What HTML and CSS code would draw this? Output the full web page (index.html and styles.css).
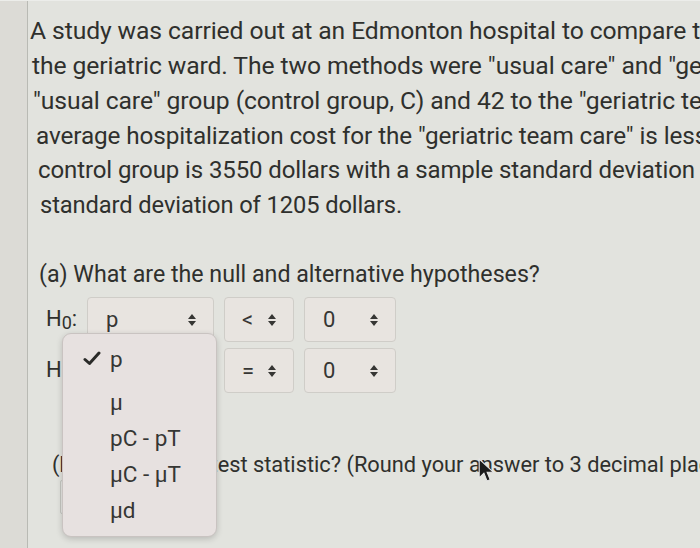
FILE: index.html
```html
<!DOCTYPE html>
<html>
<head>
<meta charset="utf-8">
<link rel="stylesheet" href="styles.css">
</head>
<body>
<div class="page">
  <div class="gutter"></div>
  <div class="main">
    <div class="prompt">
      <p class="line l1">A study was carried out at an Edmonton hospital to compare the two methods of care in</p>
      <p class="line l2">the geriatric ward. The two methods were "usual care" and "geriatric team care". 43 were assigned to the</p>
      <p class="line l3">"usual care" group (control group, C) and 42 to the "geriatric team care" group (treatment group, T).</p>
      <p class="line l4">average hospitalization cost for the "geriatric team care" is less than that for usual care.</p>
      <p class="line l5">control group is 3550 dollars with a sample standard deviation of 1150 dollars,</p>
      <p class="line l6">standard deviation of 1205 dollars.</p>
    </div>

    <div class="part-a">
      <p class="question">(a) What are the null and alternative hypotheses?</p>
      <div class="hyp-row">
        <span class="hyp-label">H<sub>0</sub>:</span>
        <div class="sel sel-param"><span>p</span><svg class="arrows" viewBox="0 0 8 12"><path d="M4 0L8 5H0Z M0 7H8L4 12Z"/></svg></div>
        <div class="sel sel-op"><span>&lt;</span><svg class="arrows" viewBox="0 0 8 12"><path d="M4 0L8 5H0Z M0 7H8L4 12Z"/></svg></div>
        <div class="sel sel-val"><span>0</span><svg class="arrows" viewBox="0 0 8 12"><path d="M4 0L8 5H0Z M0 7H8L4 12Z"/></svg></div>
      </div>
      <div class="hyp-row row2">
        <span class="hyp-label">H<sub>1</sub>:</span>
        <div class="sel sel-param"><span>p</span><svg class="arrows" viewBox="0 0 8 12"><path d="M4 0L8 5H0Z M0 7H8L4 12Z"/></svg></div>
        <div class="sel sel-op"><span>=</span><svg class="arrows" viewBox="0 0 8 12"><path d="M4 0L8 5H0Z M0 7H8L4 12Z"/></svg></div>
        <div class="sel sel-val"><span>0</span><svg class="arrows" viewBox="0 0 8 12"><path d="M4 0L8 5H0Z M0 7H8L4 12Z"/></svg></div>
      </div>
    </div>

    <div class="part-b">
      <p class="question qb"><span class="lead">(b) What is the t</span>est statistic? (Round your answer to 3 decimal places.)</p>
      <div class="answer-box"></div>
    </div>
  </div>

  <ul class="menu">
    <li class="item selected"><svg class="check" viewBox="0 0 18 15"><path d="M2 8.5L6.5 12.5L16 2" fill="none" stroke="#2a2a28" stroke-width="3" stroke-linecap="round" stroke-linejoin="round"/></svg>p</li>
    <li class="item">&mu;</li>
    <li class="item">pC - pT</li>
    <li class="item">&mu;C - &mu;T</li>
    <li class="item">&mu;d</li>
  </ul>

  <svg class="cursor" viewBox="0 0 16 24"><path d="M1 1V19L5.5 14.5L8.5 22L11.5 20.8L8.6 13.6H14.5Z" fill="#1c1c1c" stroke="#e8e8e8" stroke-width="1"/></svg>
</div>
</body>
</html>
```
FILE: styles.css
```css
html, body {
  margin: 0;
  padding: 0;
}
body {
  background: #e2e3de;
  font-family: Roboto, "Liberation Sans", sans-serif;
  color: #2f302d;
}
.page {
  position: relative;
  width: 700px;
  height: 548px;
  overflow: hidden;
  display: flex;
  border-top: 1px solid #ecedea;
  box-sizing: border-box;
}
.gutter {
  flex: 0 0 27px;
  background: #dcdbd6;
  border-right: 1px solid #b9bab4;
}
.main {
  flex: 1;
  min-width: 0;
  padding-top: 12px;
  padding-left: 2px;
  overflow: hidden;
}
p { margin: 0; }
.line {
  font-size: 24.7px;
  line-height: 35px;
  white-space: nowrap;
  letter-spacing: -0.1px;
}
.l2 { margin-left: 2px; }
.l3 { margin-left: 3px; }
.l4 { margin-left: 6px; font-size: 24.3px; }
.l5 { margin-left: 8px; font-size: 24px; }
.l6 { margin-left: 10px; font-size: 23.7px; }

.part-a {
  margin-top: 37px;
  padding-left: 9px;
}
.question {
  font-size: 23.2px;
  line-height: 29px;
  white-space: nowrap;
}
.hyp-row {
  display: flex;
  align-items: center;
  gap: 10px;
  margin-top: 8px;
  height: 45px;
}
.hyp-row.row2 { margin-top: 6px; }
.hyp-label {
  width: 38px;
  padding-left: 7px;
  box-sizing: border-box;
  font-size: 22px;
  white-space: nowrap;
}
.hyp-label sub {
  font-size: 18px;
  vertical-align: -3px;
}
.sel {
  height: 45px;
  box-sizing: border-box;
  background: #e8e4e0;
  border: 1px solid #cfcdc8;
  border-radius: 4px;
  display: flex;
  align-items: center;
  justify-content: space-between;
  font-size: 22px;
  color: #363634;
}
.sel-param { width: 127px; padding: 0 17px 0 18px; }
.sel-op { width: 70px; padding: 0 17px 0 17px; }
.sel-val { width: 92px; padding: 0 17px 0 18px; }
.arrows {
  width: 8px;
  height: 12px;
  fill: #363634;
}

.part-b {
  margin-top: 57px;
  padding-left: 22px;
}
.qb {
  font-size: 21.8px;
}
.lead {
  word-spacing: 3px;
}
.answer-box {
  width: 150px;
  height: 34px;
  margin-top: 1px;
  margin-left: 8px;
  box-sizing: border-box;
  border: 1px solid #c5c6c1;
  border-radius: 2px;
  background: #e6e7e3;
}

.menu {
  position: absolute;
  left: 62px;
  top: 332px;
  width: 155px;
  height: 204px;
  box-sizing: border-box;
  margin: 0;
  padding: 7px 0 0 0;
  list-style: none;
  background: #e7e1e0;
  border: 1px solid #c9c3c1;
  border-radius: 9px;
  box-shadow: 0 2px 6px rgba(0,0,0,0.18);
}
.item {
  position: relative;
  padding-left: 47px;
  font-size: 22.5px;
  line-height: 36px;
  color: #363634;
}
.item.selected { margin-bottom: 7px; }
.check {
  position: absolute;
  left: 20px;
  top: 10px;
  width: 18px;
  height: 15px;
}
.cursor {
  position: absolute;
  left: 478px;
  top: 457px;
  width: 17px;
  height: 25px;
}
```
